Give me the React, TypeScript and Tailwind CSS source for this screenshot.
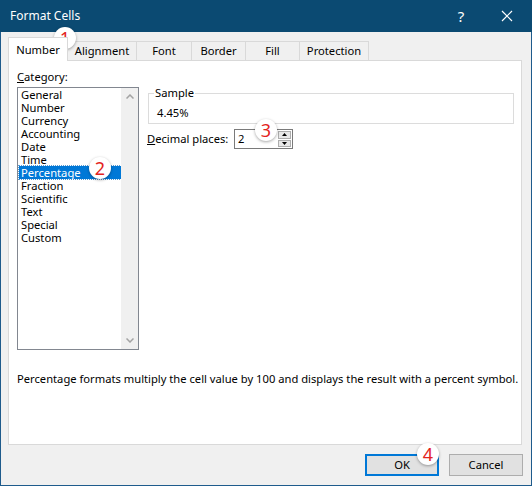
import React from "react";

const categories = [
  "General",
  "Number",
  "Currency",
  "Accounting",
  "Date",
  "Time",
  "Percentage",
  "Fraction",
  "Scientific",
  "Text",
  "Special",
  "Custom",
];

const tabs = ["Alignment", "Font", "Border", "Fill", "Protection"];
const tabWidths = ["w-[69px]", "w-[55px]", "w-[54px]", "w-[54px]", "w-[69px]"];

const Badge: React.FC<{ n: string; pos: string }> = ({ n, pos }) => (
  <div
    className={`absolute ${pos} w-[22px] h-[22px] rounded-full bg-white shadow-[0_1px_3px_rgba(0,0,0,0.35)] flex items-center justify-center text-[#e3241d] text-[18px] leading-none`}
  >
    {n}
  </div>
);

const App: React.FC = () => {
  return (
    <div
      className="relative w-[532px] h-[486px] flex flex-col bg-[#f0f0f0] border-x border-b border-[#1e5b8c] text-[11.2px] text-black whitespace-nowrap"
      style={{ fontFamily: '"Noto Sans", "Open Sans", sans-serif' }}
    >
      {/* title bar */}
      <div className="h-[32px] -mx-px bg-[#0b4a72] flex items-center text-white">
        <span className="ml-[10px] text-[12px]">Format Cells</span>
        <span className="ml-auto text-[15px] w-[12px] text-center">?</span>
        <svg className="ml-[34px] mr-[19px]" width="12" height="12" viewBox="0 0 12 12">
          <path d="M1 1 L11 11 M11 1 L1 11" stroke="white" strokeWidth="1.2" />
        </svg>
      </div>

      <div className="flex flex-col flex-1 pl-[7px] pr-[9px]">
        {/* tabs */}
        <div className="mt-[5px] h-[23px] flex items-end">
          <div className="relative z-10 w-[60px] h-[24px] -mb-px bg-white border-x border-t border-[#d9d9d9] flex items-center justify-center pt-[1px]">
            Number
          </div>
          {tabs.map((t, i) => (
            <div
              key={t}
              className={`${tabWidths[i]} h-[19px] bg-[#f0f0f0] border-t border-r border-[#d9d9d9] flex items-center justify-center`}
            >
              {t}
            </div>
          ))}
        </div>

        {/* panel */}
        <div className="h-[385px] bg-white border border-[#d9d9d9] flex flex-col pl-[8px] pr-[7px] pt-[8px]">
          <div className="flex">
            <div className="flex flex-col w-[122px]">
              <div className="leading-[16px]">
                <span className="underline">C</span>ategory:
              </div>
              <div className="mt-[2px] h-[263px] border border-[#828790] flex">
                <div className="flex-1 flex flex-col">
                  {categories.map((c) =>
                    c === "Percentage" ? (
                      <div
                        key={c}
                        className="ml-px h-[13px] leading-[13px] px-[2px] bg-[#0078d7] text-white outline-1 outline-dotted outline-[#5a9ad0]"
                      >
                        {c}
                      </div>
                    ) : (
                      <div key={c} className="h-[13px] leading-[13px] px-[3px]">
                        {c}
                      </div>
                    )
                  )}
                </div>
                <div className="w-[17px] bg-[#f0f0f0] flex flex-col items-center justify-between py-[6px]">
                  <svg width="8" height="5" viewBox="0 0 8 5">
                    <path d="M0.5 4.5 L4 1 L7.5 4.5" fill="none" stroke="#a3a3a3" strokeWidth="1.5" />
                  </svg>
                  <svg width="8" height="5" viewBox="0 0 8 5">
                    <path d="M0.5 0.5 L4 4 L7.5 0.5" fill="none" stroke="#a3a3a3" strokeWidth="1.5" />
                  </svg>
                </div>
              </div>
            </div>

            <div className="flex-1 ml-[9px] flex flex-col pt-[16px]">
              <fieldset className="border border-[#dcdcdc] pl-[5px] pt-[4px] pb-[2px]">
                <legend className="px-[1px] leading-[16px]">Sample</legend>
                <div className="pl-[3px] leading-[16px]">4.45%</div>
              </fieldset>
              <div className="mt-[5px] h-[20px] flex items-center">
                <div className="w-[87px] -ml-px">
                  <span className="underline">D</span>ecimal places:
                </div>
                <div className="w-[59px] h-[20px] border border-[#7a7a7a] flex">
                  <div className="flex-1 pl-[3px] leading-[18px]">2</div>
                  <div className="w-[15px] flex flex-col p-px gap-px">
                    <div className="flex-1 bg-[#e8e8e8] border border-[#adadad] flex items-center justify-center">
                      <svg width="5" height="3" viewBox="0 0 5 3">
                        <path d="M0 3 L2.5 0 L5 3 Z" fill="black" />
                      </svg>
                    </div>
                    <div className="flex-1 bg-[#e8e8e8] border border-[#adadad] flex items-center justify-center">
                      <svg width="5" height="3" viewBox="0 0 5 3">
                        <path d="M0 0 L2.5 3 L5 0 Z" fill="black" />
                      </svg>
                    </div>
                  </div>
                </div>
              </div>
            </div>
          </div>

          <div className="mt-[21px] leading-[16px]">
            Percentage formats multiply the cell value by 100 and displays the result with a percent symbol.
          </div>
        </div>

        {/* buttons */}
        <div className="mt-[9px] flex justify-end gap-[10px] -mr-px">
          <button className="w-[74px] h-[22px] bg-[#e1e1e1] border-2 border-[#0078d7]">
            OK
          </button>
          <button className="w-[74px] h-[22px] bg-[#e1e1e1] border border-[#adadad]">
            Cancel
          </button>
        </div>
      </div>

      <Badge n="1" pos="left-[53px] top-[27px]" />
      <Badge n="2" pos="left-[88px] top-[157px]" />
      <Badge n="3" pos="left-[254px] top-[119px]" />
      <Badge n="4" pos="left-[416px] top-[443px]" />
    </div>
  );
};

export default App;
